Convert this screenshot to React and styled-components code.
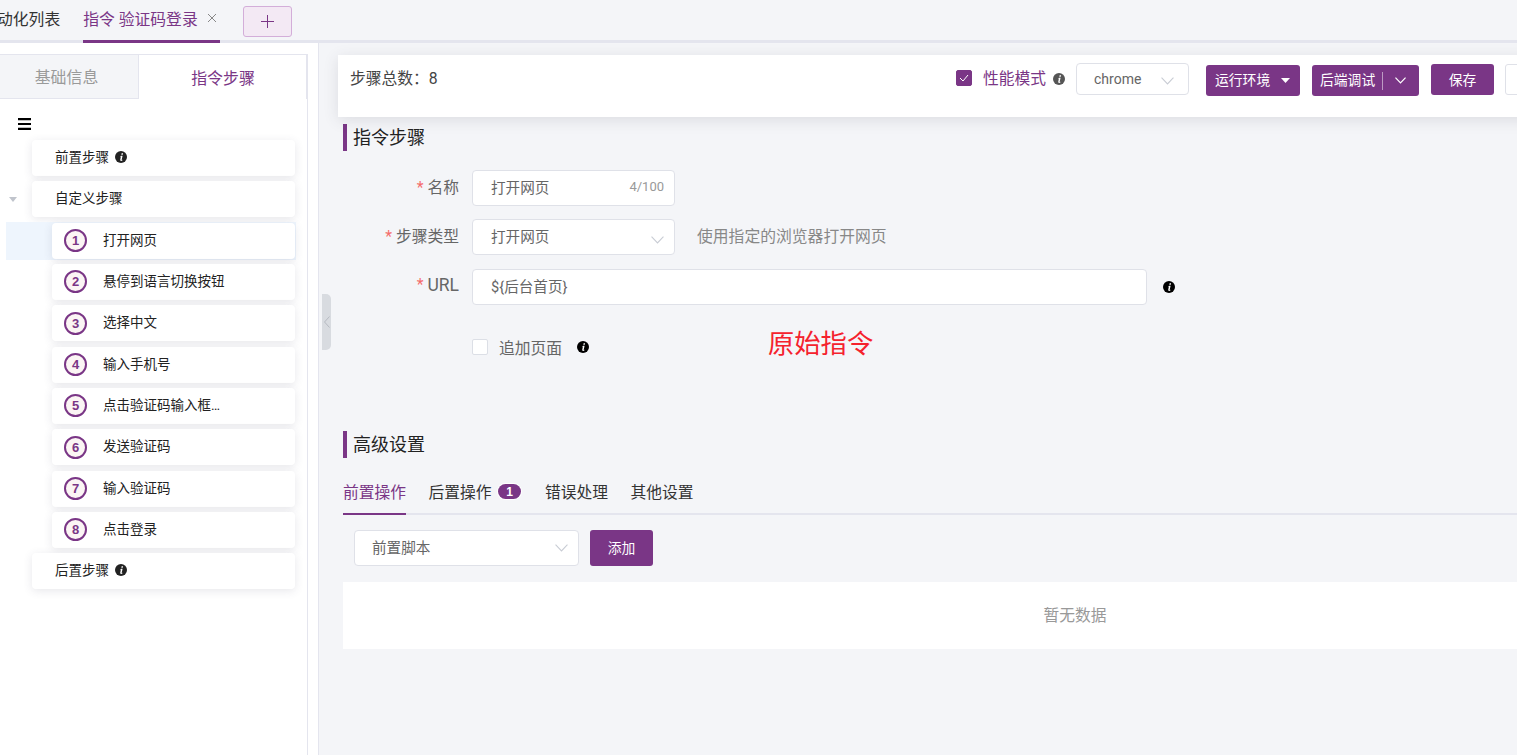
import React from "react";
import styled, { createGlobalStyle } from "styled-components";

const purple = "#7a3686";
const line = "#e4e5ee";

const GlobalStyle = createGlobalStyle`
  html, body {
    margin: 0;
    padding: 0;
    height: 100%;
    overflow: hidden;
    background: #f4f5f8;
    font-family: Roboto, "Noto Sans CJK SC", sans-serif;
  }
  * { box-sizing: border-box; }
`;

const Page = styled.div`
  width: 1517px;
  height: 755px;
  overflow: hidden;
  display: flex;
  flex-direction: column;
  background: #f4f5f8;
`;

// top tabs
const TabBar = styled.div`
  height: 43px;
  flex: none;
  display: flex;
  align-items: flex-start;
  border-bottom: 3px solid ${line};
  margin-left: -3px;
`;
const PageTab = styled.div`
  height: 43px;
  display: flex;
  align-items: center;
  gap: 9px;
  padding: 0 ${(p) => p.$pad || 0}px 4px 0;
  margin-right: ${(p) => p.$gap}px;
  font-size: 15.8px;
  color: ${(p) => (p.$active ? purple : "#333")};
  border-bottom: 3px solid ${(p) => (p.$active ? purple : "transparent")};
`;
const AddButton = styled.div`
  width: 49px;
  height: 31px;
  margin-top: 6px;
  display: flex;
  align-items: center;
  justify-content: center;
  background: #f3e9f4;
  border: 1px solid #d3aed9;
  border-radius: 3px;
  color: ${purple};
`;

const Body = styled.div`
  flex: 1;
  display: flex;
  min-height: 0;
  position: relative;
`;

// left panel
const Side = styled.aside`
  width: 319px;
  flex: none;
  padding-top: 11px;
  background: #fff;
  border-right: 1px solid ${line};
`;
const SidePanel = styled.div`
  width: 308px;
  height: 100%;
  border-right: 1px solid ${line};
  border-top: 1px solid ${line};
`;
const SideTabs = styled.div`
  height: 44px;
  display: flex;
  margin-left: -5px;
  border-right: 2px solid ${line};
  margin-right: -1px;
`;
const SideTab = styled.div`
  flex: ${(p) => (p.$active ? 1 : "none")};
  width: ${(p) => (p.$active ? "auto" : "144px")};
  display: flex;
  align-items: center;
  justify-content: center;
  padding-left: ${(p) => (p.$active ? 1 : 0)}px;
  font-size: 15.9px;
  color: ${(p) => (p.$active ? purple : "#9a9a9a")};
  background: ${(p) => (p.$active ? "#fff" : "#f4f5f8")};
  border-right: ${(p) => (p.$active ? "0" : `1px solid ${line}`)};
  border-bottom: ${(p) => (p.$active ? "0" : `1px solid ${line}`)};
`;
const Burger = styled.div`
  height: 41px;
  padding: 19px 0 0 18px;
  & > svg {
    display: block;
  }
`;
const Tree = styled.div`
  display: flex;
  flex-direction: column;
  gap: 5.33px;
`;
const TreeRow = styled.div`
  position: relative;
  display: flex;
  height: 36px;
  padding-left: ${(p) => (p.$child ? 52 : 32)}px;
  &::before {
    content: "";
    display: ${(p) => (p.$selected ? "block" : "none")};
    position: absolute;
    left: 6px;
    top: -1px;
    width: 290px;
    height: 38px;
    background: #eef5fd;
  }
`;
const Caret = styled.span`
  position: absolute;
  left: 9px;
  top: 16px;
  width: 0;
  height: 0;
  border-left: 4.5px solid transparent;
  border-right: 4.5px solid transparent;
  border-top: 5px solid #c0c4cc;
`;
const Card = styled.div`
  position: relative;
  width: ${(p) => (p.$child ? 243 : 263)}px;
  height: 36px;
  display: flex;
  align-items: center;
  gap: 6px;
  padding-left: ${(p) => (p.$child ? 12 : 23)}px;
  background: #fff;
  border-radius: 4px;
  box-shadow: 0 2px 10px rgba(60, 60, 90, 0.12);
  font-size: 13.5px;
  color: #222;
`;
const CardText = styled.span`
  margin-bottom: 4px;
`;
const CardInfo = styled.span`
  display: flex;
  margin-bottom: 2px;
`;
const StepNum = styled.span`
  width: 23px;
  height: 23px;
  margin-right: 10px;
  border: 2px solid ${purple};
  border-radius: 50%;
  background: #fbf5f4;
  color: ${purple};
  display: flex;
  align-items: center;
  justify-content: center;
  font: bold 13px "Liberation Sans", sans-serif;
`;

const Handle = styled.div`
  position: absolute;
  left: 322px;
  top: 251px;
  width: 9px;
  height: 56px;
  background: #d8dbe0;
  border-radius: 0 5px 5px 0;
  display: flex;
  align-items: center;
  justify-content: center;
`;

// right side
const Main = styled.main`
  flex: 1;
  min-width: 0;
  padding-left: 24px;
`;
const Toolbar = styled.div`
  width: 1239px;
  height: 62px;
  margin: 12px 0 0 -5px;
  padding: 12px 12px 0;
  display: flex;
  align-items: flex-start;
  background: #fff;
  box-shadow: 0 3px 14px rgba(60, 60, 80, 0.13);
  position: relative;
`;
const Total = styled.div`
  font-size: 15.75px;
  color: #444;
  line-height: 24px;
`;
const ToolRight = styled.div`
  margin-left: auto;
  display: flex;
  align-items: flex-start;
`;
const CheckSlot = styled.span`
  display: flex;
  padding-top: 3px;
`;
const InfoSlot = styled.span`
  display: flex;
  padding-top: ${(p) => p.$top || 0}px;
  margin-left: ${(p) => p.$left || 0}px;
`;
const CheckBox = styled.span`
  width: 16px;
  height: 16px;
  flex: none;
  border-radius: 2px;
  background: ${(p) => (p.$on ? purple : "#fff")};
  border: 1px solid ${(p) => (p.$on ? purple : "#dcdfe6")};
  display: flex;
  align-items: center;
  justify-content: center;
`;
const PerfLabel = styled.span`
  margin: 0 7px 0 11px;
  font-size: 15.75px;
  line-height: 24px;
  color: ${purple};
`;
const ToolSelect = styled.div`
  width: 113px;
  height: 32px;
  margin: -4px 17px 0 11px;
  padding: 0 14px 0 17px;
  display: flex;
  align-items: center;
  justify-content: space-between;
  background: #fff;
  border: 1px solid #dfe1e8;
  border-radius: 4px;
  font-size: 14px;
  color: #666;
`;
const Button = styled.div`
  height: ${(p) => p.$h || 31}px;
  width: ${(p) => p.$w}px;
  flex: none;
  margin-top: ${(p) => p.$top ?? -2}px;
  margin-right: ${(p) => p.$right ?? 12}px;
  padding-left: ${(p) => p.$pad || 0}px;
  display: flex;
  align-items: center;
  justify-content: ${(p) => (p.$pad ? "flex-start" : "center")};
  background: ${purple};
  border-radius: 3px;
  color: #fff;
  font-size: 13.8px;
`;
const ButtonText = styled.span`
  margin-bottom: ${(p) => p.$lift ?? 4}px;
`;
const Caretlet = styled.svg`
  margin-left: 11px;
`;
const Divider = styled.span`
  width: 1px;
  height: 18px;
  margin: 0 12px 0 7px;
  background: rgba(255, 255, 255, 0.5);
`;
const GhostButton = styled.div`
  width: 60px;
  height: 31px;
  margin-top: -3px;
  background: #fff;
  border: 1px solid #dfe1e8;
  border-radius: 3px;
`;

const SectionTitle = styled.h2`
  margin: ${(p) => p.$top}px 0 0;
  height: 27px;
  border-left: 4px solid ${purple};
  padding: 0 0 4px 6px;
  display: flex;
  align-items: center;
  font-size: 18px;
  font-weight: 400;
  color: #222;
`;
const FormRow = styled.div`
  display: flex;
  align-items: center;
  height: 36px;
  margin-top: ${(p) => p.$top}px;
`;
const Label = styled.label`
  width: 116px;
  flex: none;
  margin-right: 13px;
  padding-bottom: 4px;
  text-align: right;
  font-size: 15.75px;
  color: #666;
  &::before {
    content: "* ";
    color: #f56c6c;
  }
`;
const LatinLabel = styled.span`
  font-size: 17.5px;
  vertical-align: -1px;
`;
const Field = styled.div`
  width: ${(p) => p.$w}px;
  height: 36px;
  flex: none;
  padding: 0 10px 4px ${(p) => p.$pad || 18}px;
  display: flex;
  align-items: center;
  justify-content: space-between;
  background: #fff;
  border: 1px solid #dfe1e8;
  border-radius: 4px;
  font-size: 14.6px;
  color: #666;
`;
const Count = styled.span`
  font-size: 13px;
  color: #999;
`;
const Hint = styled.span`
  margin-left: 22px;
  padding-bottom: 4px;
  font-size: 15.8px;
  color: #888;
`;
const CheckRow = styled.div`
  display: flex;
  align-items: center;
  height: 36px;
  margin: 24px 0 0 129px;
`;
const CheckLabel = styled.span`
  margin: 0 15px 0 11px;
  font-size: 15.75px;
  color: #666;
`;
const RedNote = styled.span`
  margin-left: 179px;
  margin-top: -12px;
  font-size: 26.3px;
  color: #f5222d;
`;
const SubTabs = styled.div`
  display: flex;
  height: 37px;
  margin-top: 20px;
  border-bottom: 2px solid ${line};
`;
const SubTab = styled.div`
  height: 37px;
  margin-right: 22.5px;
  display: flex;
  align-items: center;
  gap: 6.5px;
  padding-bottom: 8px;
  font-size: 15.75px;
  color: ${(p) => (p.$active ? purple : "#333")};
  border-bottom: 2px solid ${(p) => (p.$active ? purple : "transparent")};
`;
const Badge = styled.span`
  width: 23px;
  height: 15px;
  margin-right: 1.5px;
  border-radius: 8px;
  background: ${purple};
  box-shadow: 0 0 0 1px #fff;
  color: #fff;
  display: flex;
  align-items: center;
  justify-content: center;
  font: bold 12px "Liberation Sans", sans-serif;
`;
const AddRow = styled.div`
  display: flex;
  gap: 11px;
  margin: 15px 0 0 11px;
`;
const Empty = styled.div`
  width: 1464px;
  height: 67px;
  margin-top: 16px;
  padding-bottom: 2px;
  display: flex;
  align-items: center;
  justify-content: center;
  background: #fff;
  font-size: 15.75px;
  color: #999;
`;
const ChevronSvg = styled.svg`
  flex: none;
  margin-top: ${(p) => p.$drop || 0}px;
`;

const InfoIcon = ({ size = 12, color = "#000" }) => (
  <svg width={size} height={size} viewBox="0 0 12 12" style={{ flex: "none" }}>
    <circle cx="6" cy="6" r="6" fill={color} />
    <path d="M6.6 2.2h1.5l-.3 1.5H6.3zM6 4.7h1.6l-.9 4c0 .3.2.3.7.1v.8c-.9.5-2.300.5-2.200-.6l.6-3.200h-.7z" fill="#fff" />
  </svg>
);

const Chevron = ({ w = 12, color = "#c8ccd4", drop, sw = 1 }) => (
  <ChevronSvg $drop={drop} width={w} height={w * 0.6} viewBox="0 0 12 7" fill="none" stroke={color} strokeWidth={sw}>
    <path d="M.5.5 6 6.300 11.500.5" />
  </ChevronSvg>
);

const steps = ["打开网页", "悬停到语言切换按钮", "选择中文", "输入手机号", "点击验证码输入框…", "发送验证码", "输入验证码", "点击登录"];

export default function App() {
  return (
    <Page>
      <GlobalStyle />
      <TabBar>
        <PageTab $gap={23}>动化列表</PageTab>
        <PageTab $gap={23} $pad={3} $active>
          指令 验证码登录
          <svg width="10" height="10" viewBox="0 0 10 10" stroke="#888" strokeWidth="1"><path d="M1 1l8 8M9 1l-8 8" /></svg>
        </PageTab>
        <AddButton>
          <svg width="13" height="13" viewBox="0 0 13 13" stroke={purple} strokeWidth="1"><path d="M6.500 0v13M0 6.500h13" /></svg>
        </AddButton>
      </TabBar>
      <Body>
        <Side>
          <SidePanel>
            <SideTabs>
              <SideTab>基础信息</SideTab>
              <SideTab $active>指令步骤</SideTab>
            </SideTabs>
            <Burger>
              <svg width="13" height="12" viewBox="0 0 13 12" fill="#000"><path d="M0 0h13v2.200H0zM0 4.900h13v2.200H0zM0 9.800h13V12H0z" /></svg>
            </Burger>
            <Tree>
              <TreeRow><Card><CardText>前置步骤</CardText><CardInfo><InfoIcon color="#222" /></CardInfo></Card></TreeRow>
              <TreeRow><Caret /><Card><CardText>自定义步骤</CardText></Card></TreeRow>
              {steps.map((s, i) => (
                <TreeRow key={s} $child $selected={i === 0}>
                  <Card $child><StepNum>{i + 1}</StepNum><CardText>{s}</CardText></Card>
                </TreeRow>
              ))}
              <TreeRow><Card><CardText>后置步骤</CardText><CardInfo><InfoIcon color="#222" /></CardInfo></Card></TreeRow>
            </Tree>
          </SidePanel>
        </Side>
        <Handle>
          <svg width="6" height="12" viewBox="0 0 6 12" fill="none" stroke="#b5b9c0"><path d="M5.500.5.500 6l5 5.500" /></svg>
        </Handle>
        <Main>
          <Toolbar>
            <Total>步骤总数：8</Total>
            <ToolRight>
              <CheckSlot>
                <CheckBox $on>
                  <svg width="10" height="8" viewBox="0 0 10 8" fill="none" stroke="#fff" strokeWidth="1"><path d="M1 4l3 3 5-6" /></svg>
                </CheckBox>
              </CheckSlot>
              <PerfLabel>性能模式</PerfLabel>
              <InfoSlot $top={6}><InfoIcon color="#555" /></InfoSlot>
              <ToolSelect>chrome<Chevron w={13} drop={4} /></ToolSelect>
              <Button $w={94} $pad={9}>
                <ButtonText>运行环境</ButtonText>
                <Caretlet width="9" height="5" viewBox="0 0 9 5" fill="#fff"><path d="M0 0h9L4.500 5z" /></Caretlet>
              </Button>
              <Button $w={107} $pad={8}>
                <ButtonText>后端调试</ButtonText><Divider /><Chevron w={11} color="#fff" sw={1.3} />
              </Button>
              <Button $w={63} $top={-3} $right={11}><ButtonText $lift={2}>保存</ButtonText></Button>
              <GhostButton />
            </ToolRight>
          </Toolbar>
          <SectionTitle $top={7}>指令步骤</SectionTitle>
          <FormRow $top={19}>
            <Label>名称</Label>
            <Field $w={203}>打开网页<Count>4/100</Count></Field>
          </FormRow>
          <FormRow $top={13}>
            <Label>步骤类型</Label>
            <Field $w={203}>打开网页<Chevron w={13} drop={10} /></Field>
            <Hint>使用指定的浏览器打开网页</Hint>
          </FormRow>
          <FormRow $top={14}>
            <Label><LatinLabel>URL</LatinLabel></Label>
            <Field $w={675}>{"${后台首页}"}</Field>
            <InfoSlot $left={16}><InfoIcon /></InfoSlot>
          </FormRow>
          <CheckRow>
            <CheckBox />
            <CheckLabel>追加页面</CheckLabel>
            <InfoIcon />
            <RedNote>原始指令</RedNote>
          </CheckRow>
          <SectionTitle $top={66}>高级设置</SectionTitle>
          <SubTabs>
            <SubTab $active>前置操作</SubTab>
            <SubTab>后置操作<Badge>1</Badge></SubTab>
            <SubTab>错误处理</SubTab>
            <SubTab>其他设置</SubTab>
          </SubTabs>
          <AddRow>
            <Field $w={225} $pad={17}>前置脚本<Chevron w={13} drop={4} /></Field>
            <Button $w={63} $h={36} $top={0} $right={0}><ButtonText $lift={2}>添加</ButtonText></Button>
          </AddRow>
          <Empty>暂无数据</Empty>
        </Main>
      </Body>
    </Page>
  );
}
